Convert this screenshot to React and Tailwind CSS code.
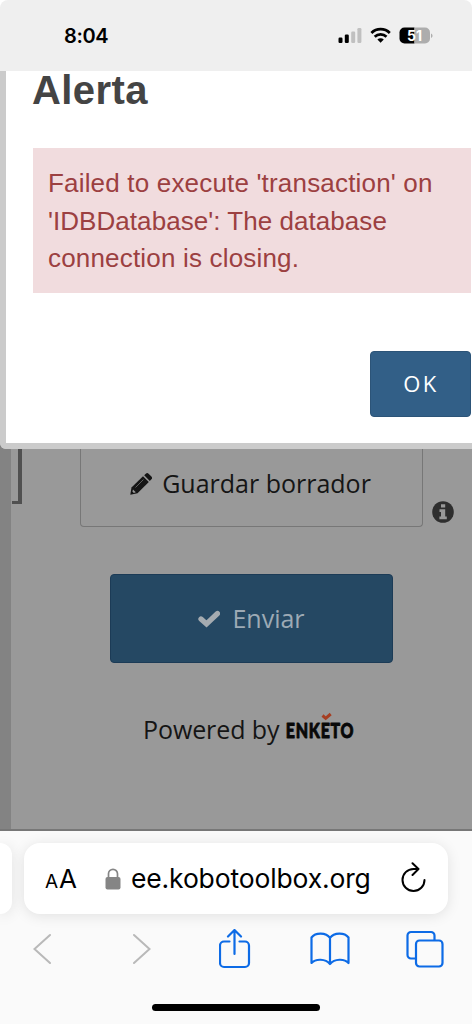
const StatusBar = () => (
  <header className="bg-white">
    <div className="flex h-[71px] items-center rounded-t-lg bg-[#efefef] pl-16 pr-[39px]">
      <span className="flex-1 font-['Inter'] text-[20px] font-semibold leading-6 tracking-[-0.4px] text-black">8:04</span>
      <svg className="h-[18px] w-[95px]" viewBox="0 0 95 18">
        {/* Signal */}
        <rect x="0.5" y="10.500" width="4" height="5.500" rx="1.2" />
        <rect x="6.800" y="7.500" width="4" height="8.500" rx="1.2" />
        <rect x="13.200" y="4.500" width="4" height="11.500" rx="1.2" fill="#c0c0c0" />
        <rect x="19.400" y="1" width="4" height="15" rx="1.2" fill="#c0c0c0" />
        {/* Wifi */}
        <g fill="none" stroke="#000" strokeWidth="2.7">
          <path d="M33.4 6a13 13 0 0 1 18.4 0" />
          <path d="M36.7 9.700a8.4 8.4 0 0 1 11.8 0" />
        </g>
        <path d="M39.4 12.500a4.6 4.6 0 0 1 6.4 0l-3.2 3.2z" />
        {/* Battery */}
        <path d="M66.500 0.500h10v16h-10a5 5 0 0 1-5-5v-6a5 5 0 0 1 5-5z" />
        <path d="M76.500 0.500h10.500a5 5 0 0 1 5 5v6a5 5 0 0 1-5 5h-10.500z" fill="#adadad" />
        <path d="M93 6.500v4.500c2-.8 2-3.700 0-4.500z" fill="#adadad" />
        <text x="76.500" y="13.500" textAnchor="middle" fill="#fff" className="font-['Inter'] text-[14px] font-bold">51</text>
      </svg>
    </div>
  </header>
);

const AlertDialog = () => (
  <section className="h-[378px] rounded-bl-md border-b-[6px] border-l-[6px] border-[#cbcbcb] bg-white pl-[26px] pr-px">
    <h1 className="h-[77px] font-['Liberation_Sans'] text-[40px] font-bold leading-[39px] tracking-[0.4px] text-[#444]">Alerta</h1>
    <p className="ml-[0.5px] h-[145px] whitespace-nowrap bg-[#f1dcde] pl-[15.5px] pt-[17px] font-['Liberation_Sans'] text-[26px] leading-[37.7px] tracking-[0.18px] text-[#9c4041]">
      Failed to execute 'transaction' on
      <br />
      <span className="tracking-[0.05px]">'IDBDatabase': The database</span>
      <br />
      connection is closing.
    </p>
    <div className="flex justify-end pt-[58px]">
      <button className="h-[66px] w-[101px] rounded border border-[#2c5478] bg-[#325f87] pb-0.5 pl-px font-['Open_Sans'] text-[22px] tracking-[2.5px] text-white">
        OK
      </button>
    </div>
  </section>
);

const PencilIcon = () => (
  <svg className="mr-2.5 size-[22px]" viewBox="0 0 22 22" fill="currentColor">
    <path d="M13 3.200l5.800 5.800L7.500 20.300.3 21.800 1.500 14.600z" />
    <path d="M14.200 2.200L15.800.7a2 2 0 0 1 2.800 0l2.800 2.800a2 2 0 0 1 0 2.800l-1.600 1.600z" />
    <path d="M3 16.500l2.800 2.800-2 .6-1.400-1.400z" fill="#999" />
    <path d="M5.500 14.500l8-8" stroke="#666" strokeWidth="0.9" />
  </svg>
);

const CheckIcon = () => (
  <svg className="mr-3 h-[18px] w-[22px] text-[#a5abb0]" viewBox="0 0 22 18">
    <path d="M3 9l5.500 5L19.500 3.500" fill="none" stroke="currentColor" strokeWidth="5.300" strokeLinejoin="miter" strokeLinecap="round" />
  </svg>
);

const InfoIcon = () => (
  <svg className="ml-[9px] mt-[52px] size-[22px]" viewBox="0 0 22 22">
    <circle cx="11" cy="11" r="10.800" fill="#2e2e2e" />
    <path d="M9 3.300h4.200v3.200H9zM7.500 8.300h5.700v7.300h1.600v2.700H7.400v-2.700H9V11H7.500z" fill="#999" />
  </svg>
);

const EnketoLogo = () => (
  <svg className="h-9 w-[70px] overflow-visible" viewBox="0 0 70 36">
    <text
      x="1.800"
      y="26"
      textLength="68.500"
      lengthAdjust="spacingAndGlyphs"
      stroke="#080808"
      strokeWidth="0.9"
      strokeLinejoin="round"
      fill="#080808"
      className="font-['Lato'] text-[21.500px] font-black tracking-[1px]"
    >
      ENKETO
    </text>
    <path d="M38.500 3.500l3.200 2.800 5-4.300" fill="none" stroke="#a63e22" strokeWidth="3" />
  </svg>
);

const FormPage = () => (
  <main className="flex h-[380px] bg-[#999]">
    <div className="w-[11px] bg-[#838383]" />
    <div className="flex-1">
      <div className="flex h-[78px]">
        <div className="ml-px h-[55px] w-[10px] border-b-[3px] border-r-4 border-[#505050]" />
        <div className="ml-[58px] flex h-[78px] w-[343px] items-center justify-center rounded-b border border-t-0 border-[#777] pb-2 pr-0.5 font-['Open_Sans'] text-[25px] text-[#151515]">
          <PencilIcon />
          Guardar borrador
        </div>
        <InfoIcon />
      </div>
      <button className="ml-[99px] mt-[47px] flex h-[89px] w-[283px] items-center justify-center rounded border border-[#1c3b56] bg-[#254863] font-['Open_Sans'] text-[25px] text-[#9daab5]">
        <CheckIcon />
        Enviar
      </button>
      <div className="ml-[132px] mt-[49px] flex h-9 items-center font-['Open_Sans'] text-[25px] text-[#151515]">
        <span className="mr-[5px] tracking-[-0.1px]">Powered by</span>
        <EnketoLogo />
      </div>
    </div>
  </main>
);

const BrowserBar = () => (
  <footer className="h-[195px] border-t-2 border-[#777] bg-[#fafafa]">
    <div className="flex pt-3">
      <div className="h-[71px] w-3 rounded-r-xl bg-white shadow-[0_2px_14px_rgba(0,0,0,0.1)]" />
      <div className="ml-3 flex h-[71px] w-[424px] items-center rounded-2xl bg-white pl-[21px] text-black shadow-[0_2px_14px_rgba(0,0,0,0.1)]">
        <div className="flex w-[60px] items-baseline font-['Inter'] leading-none">
          <span className="text-[19px]">A</span>
          <span className="ml-px text-[26px]">A</span>
        </div>
        <svg className="h-[22px] w-4" viewBox="0 0 16 22">
          <rect x="0.500" y="9" width="15" height="12.500" rx="2" fill="#858585" />
          <path d="M3.500 10V5.800a4.500 4.500 0 0 1 9 0V10" fill="none" stroke="#858585" strokeWidth="1.700" />
        </svg>
        <span className="ml-2.5 w-[269px] whitespace-nowrap font-['Inter'] text-[26.500px] tracking-[-0.15px]">ee.kobotoolbox.org</span>
        <svg className="mb-1 h-[30px] w-[26px]" viewBox="0 0 26 30" fill="none" stroke="#000" strokeWidth="2" strokeLinecap="round" strokeLinejoin="round">
          <path d="M17.500 6.900H13.500a11 11 0 1 0 11 11" />
          <path d="M12.500 1.300l6 5.700-6 6" />
        </svg>
      </div>
    </div>
    <nav className="flex h-[70px] items-center pl-[33px] text-[#0d6be6]">
      <svg className="h-8 w-[18px]" viewBox="0 0 18 32" fill="none" stroke="#b9b9b9" strokeWidth="2" strokeLinecap="round">
        <path d="M17 2L1.500 16 17 30" />
      </svg>
      <svg className="ml-[82px] h-8 w-[18px]" viewBox="0 0 18 32" fill="none" stroke="#b9b9b9" strokeWidth="2" strokeLinecap="round">
        <path d="M1 2l15.500 14L1 30" />
      </svg>
      <svg className="ml-[68px] h-10 w-8" viewBox="0 0 32 40" fill="none" stroke="currentColor" strokeWidth="2.200" strokeLinecap="round" strokeLinejoin="round">
        <path d="M10.500 12.500H5a4 4 0 0 0-4 4V34a4 4 0 0 0 4 4h21a4 4 0 0 0 4-4V16.500a4 4 0 0 0-4-4H20.500" />
        <path d="M15.500 25V1.500M9 7.500l6.500-6.500 6.500 6.500" />
      </svg>
      <svg className="ml-[59px] h-9 w-10" viewBox="0 0 40 36" fill="none" stroke="currentColor" strokeWidth="2.200" strokeLinejoin="round">
        <path d="M20 7v26M20 7C16 1.200 5.500 1.200 1.500 6.500V32c4-4.500 14-4.500 18.500 1c4.500-5.500 14.500-5.500 18.500-1V6.500C34.500 1.200 24 1.200 20 7z" />
      </svg>
      <svg className="ml-[56px] h-[38px] w-[38px]" viewBox="0 0 38 38" fill="none" stroke="currentColor" strokeWidth="2.200">
        <rect x="10" y="10.500" width="26.500" height="26" rx="3.500" />
        <path d="M10 28.500H5a3.500 3.500 0 0 1-3.500-3.500V5.500A3.500 3.500 0 0 1 5 2h20a3.500 3.500 0 0 1 3.500 3.500v5" />
      </svg>
    </nav>
    <div className="mx-auto mt-5 h-[7px] w-[168px] rounded-full bg-black" />
  </footer>
);

export default function App() {
  return (
    <div className="flex h-[1024px] w-[472px] flex-col overflow-hidden bg-[#838383]">
      <StatusBar />
      <AlertDialog />
      <FormPage />
      <BrowserBar />
    </div>
  );
}
